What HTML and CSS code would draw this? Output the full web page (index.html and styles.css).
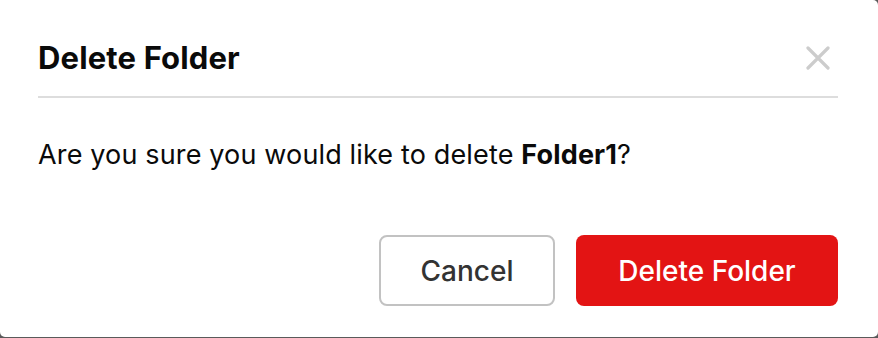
FILE: index.html
```html
<!DOCTYPE html>
<html lang="en">
<head>
<meta charset="utf-8">
<title>Delete Folder</title>
<link rel="stylesheet" href="styles.css">
</head>
<body>
<div class="modal">
  <div class="modal-header">
    <h2 class="modal-title">Delete Folder</h2>
    <button class="close-btn" aria-label="Close">
      <svg width="24" height="24" viewBox="0 0 24 24"><path d="M2 2L22 22M22 2L2 22" stroke="#cccccc" stroke-width="3.2" stroke-linecap="round" fill="none"/></svg>
    </button>
  </div>
  <p class="modal-body">Are you sure you would like to delete <strong>Folder1</strong>?</p>
  <div class="modal-footer">
    <button class="btn btn-cancel">Cancel</button>
    <button class="btn btn-danger">Delete Folder</button>
  </div>
</div>
</body>
</html>
```
FILE: styles.css
```css
html, body {
  margin: 0;
  padding: 0;
}
body {
  background: #5a5a5a;
  font-family: Inter, "Noto Sans", "Liberation Sans", sans-serif;
  width: 878px;
  height: 338px;
  overflow: hidden;
}
.modal {
  background: #ffffff;
  height: 337px;
  box-sizing: border-box;
  padding: 0 40px 0 38px;
  border-radius: 0 5px 5px 5px;
  display: flex;
  flex-direction: column;
}
.modal-header {
  display: flex;
  align-items: center;
  justify-content: space-between;
  padding: 39px 0 19px;
  border-bottom: 2px solid #dddddd;
}
.modal-title {
  margin: 0;
  font-size: 31px;
  line-height: 38px;
  font-weight: 700;
  color: #0a0a0a;
  letter-spacing: 0.15px;
}
.close-btn {
  background: none;
  border: 0;
  padding: 0;
  margin-right: 8px;
  width: 24px;
  height: 24px;
  display: flex;
}
.modal-body {
  margin: 41px 0 0;
  font-size: 27px;
  line-height: 32px;
  color: #0a0a0a;
  letter-spacing: 0.15px;
}
.modal-body strong {
  font-weight: 700;
}
.modal-footer {
  margin-top: 64px;
  display: flex;
  justify-content: flex-end;
  gap: 21px;
}
.btn {
  height: 71px;
  border-radius: 8px;
  font-family: inherit;
  font-size: 28px;
  font-weight: 500;
  display: flex;
  align-items: center;
  justify-content: center;
  box-sizing: border-box;
  padding: 0;
}
.btn-cancel {
  width: 176px;
  background: #ffffff;
  border: 2px solid #c2c2c2;
  color: #333333;
}
.btn-danger {
  width: 262px;
  background: #e31414;
  border: 0;
  color: #ffffff;
}
```
